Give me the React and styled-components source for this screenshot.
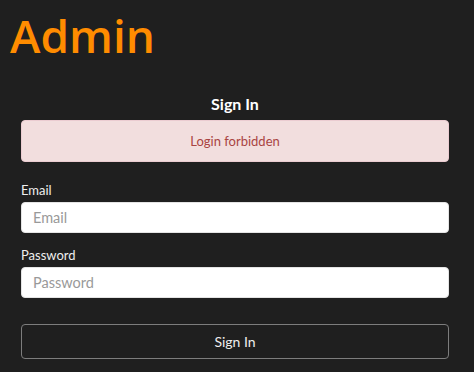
import React from 'react';
import styled, { createGlobalStyle } from 'styled-components';

const GlobalStyle = createGlobalStyle`
  html, body {
    margin: 0;
    padding: 0;
    background-color: #1f1f1f;
  }

  body {
    font-family: Lato, 'Liberation Sans', sans-serif;
    color: #eeeeee;
  }

  * {
    box-sizing: border-box;
  }
`;

const Page = styled.div`
  min-height: 372px;
  padding: 12px 0 0 0;
`;

const Brand = styled.h1`
  margin: 0 0 35px 10px;
  font-family: 'Open Sans', 'Noto Sans', sans-serif;
  font-size: 46px;
  line-height: 47px;
  font-weight: 600;
  color: #ff8c00;
`;

const Form = styled.form`
  display: flex;
  flex-direction: column;
  width: 428px;
  margin-left: 21px;
`;

const Title = styled.h2`
  margin: 0 0 7px 0;
  font-size: 16px;
  line-height: 19px;
  font-weight: 700;
  text-align: center;
  color: #ffffff;
`;

const Alert = styled.div`
  padding: 12px;
  margin-bottom: 20px;
  font-size: 13px;
  line-height: 16px;
  text-align: center;
  color: #a94442;
  background-color: #f2dede;
  border: 1px solid #ebccd1;
  border-radius: 4px;
`;

const Group = styled.div`
  display: flex;
  flex-direction: column;
  margin-bottom: ${p => (p.last ? '26px' : '14px')};
`;

const Label = styled.label`
  display: block;
  margin-bottom: 4px;
  font-size: 13px;
  line-height: 16px;
  color: #eeeeee;
`;

const Input = styled.input`
  height: 31px;
  padding: 0 11px;
  font-family: Lato, 'Liberation Sans', sans-serif;
  font-size: 14.5px;
  color: #333;
  background-color: #ffffff;
  border: 1px solid #e4e4e4;
  border-radius: 4px;
  outline: none;

  &::placeholder {
    color: #999999;
  }
`;

const Button = styled.button`
  height: 35px;
  font-family: Lato, 'Liberation Sans', sans-serif;
  font-size: 14px;
  color: #eeeeee;
  background-color: transparent;
  border: 1px solid #7d7d7d;
  border-radius: 4px;
  cursor: pointer;
`;

const App = () => (
  <>
    <GlobalStyle />
    <Page>
      <Brand>Admin</Brand>
      <Form onSubmit={e => e.preventDefault()}>
        <Title>Sign In</Title>
        <Alert>Login forbidden</Alert>
        <Group>
          <Label htmlFor="email">Email</Label>
          <Input id="email" type="email" placeholder="Email" />
        </Group>
        <Group last>
          <Label htmlFor="password">Password</Label>
          <Input id="password" type="password" placeholder="Password" />
        </Group>
        <Button type="submit">Sign In</Button>
      </Form>
    </Page>
  </>
);

export default App;
